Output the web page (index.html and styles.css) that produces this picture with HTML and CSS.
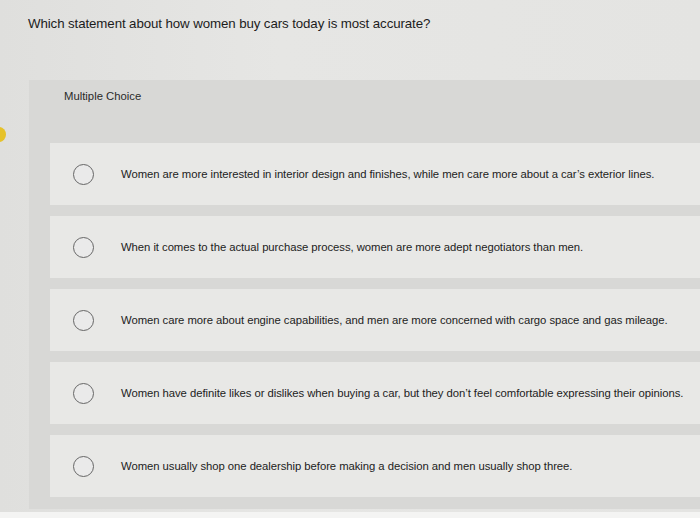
FILE: index.html
```html
<!DOCTYPE html>
<html>
<head>
<meta charset="utf-8">
<link rel="stylesheet" href="styles.css">
</head>
<body>
<div class="page">
  <span class="marker"></span>
  <h1 class="question">Which statement about how women buy cars today is most accurate?</h1>
  <section class="panel">
    <div class="type">Multiple Choice</div>
    <ul class="options">
      <li class="option"><span class="radio"></span><span class="label">Women are more interested in interior design and finishes, while men care more about a car’s exterior lines.</span></li>
      <li class="option"><span class="radio"></span><span class="label">When it comes to the actual purchase process, women are more adept negotiators than men.</span></li>
      <li class="option"><span class="radio"></span><span class="label">Women care more about engine capabilities, and men are more concerned with cargo space and gas mileage.</span></li>
      <li class="option"><span class="radio"></span><span class="label">Women have definite likes or dislikes when buying a car, but they don’t feel comfortable expressing their opinions.</span></li>
      <li class="option"><span class="radio"></span><span class="label">Women usually shop one dealership before making a decision and men usually shop three.</span></li>
    </ul>
  </section>
</div>
</body>
</html>
```
FILE: styles.css
```css
html, body {
  margin: 0;
  padding: 0;
  background: #e3e3e1;
  font-family: "Liberation Sans", Arial, sans-serif;
  color: #222;
}
.page {
  position: relative;
  width: 700px;
  height: 518px;
  overflow: hidden;
  display: flex;
  flex-direction: column;
  background: linear-gradient(90deg, #dfdfdd 0%, #e6e6e4 40%, #e4e4e2 100%);
  border-bottom: 6px solid #f4f4f3;
  box-sizing: border-box;
}
.marker {
  position: absolute;
  left: -7px;
  top: 127px;
  width: 13px;
  height: 15px;
  border-radius: 50%;
  background: #e6c22a;
}
.question {
  margin: 15px 0 0 28px;
  font-size: 13.3px;
  font-weight: normal;
  line-height: 18px;
  color: #1c1c1c;
  letter-spacing: -0.1px;
}
.panel {
  margin: 47px 0 3px 29px;
  flex: 1;
  background: #d8d8d6;
  padding: 8px 0 0 0;
}
.type {
  margin-left: 35px;
  font-size: 11.3px;
  line-height: 16px;
  color: #2a2a2a;
}
.options {
  list-style: none;
  margin: 39px 0 0 21px;
  padding: 0;
  display: flex;
  flex-direction: column;
  gap: 11px;
}
.option {
  height: 62px;
  background: #e8e8e6;
  display: flex;
  align-items: center;
  gap: 27px;
  padding-left: 23px;
}
.radio {
  width: 21px;
  height: 21px;
  border: 1.4px solid #666;
  border-radius: 50%;
  flex: none;
  background: #eaeaea;
  box-sizing: border-box;
}
.label {
  font-size: 11.3px;
  color: #222;
  letter-spacing: -0.05px;
}
```
